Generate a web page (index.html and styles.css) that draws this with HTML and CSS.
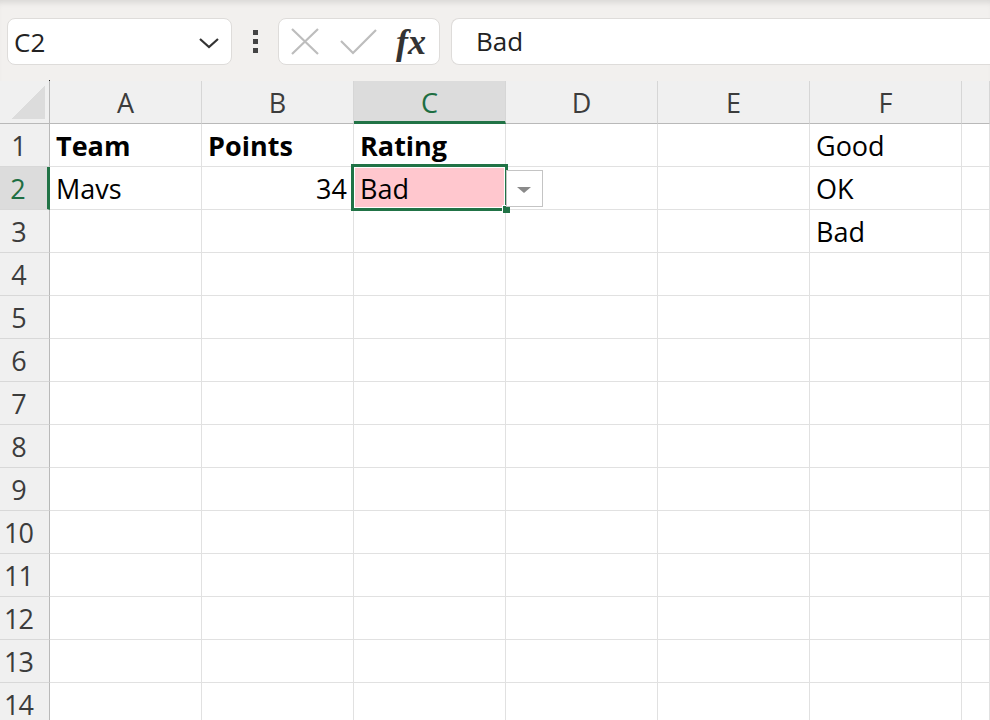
FILE: index.html
```html
<!DOCTYPE html>
<html lang="en">

<head>
    <meta charset="UTF-8">
    <meta name="viewport" content="width=device-width, initial-scale=1.0">
    <title>Rating - dropdown</title>
    <link rel="stylesheet" href="styles.css">
</head>

<body>
    <!-- formula bar -->
    <div class="toolbar">
        <div class="namebox">
            <span>C2</span>
            <svg class="chevron" width="22" height="12" viewBox="0 0 22 12">
                <path d="M2 2 L11 10 L20 2" fill="none" stroke="#333" stroke-width="2.2" />
            </svg>
        </div>
        <div class="grip">
            <i></i><i></i><i></i>
        </div>
        <div class="fxbtns">
            <svg width="28" height="27" viewBox="0 0 28 27">
                <path d="M1 1 L27 26 M27 1 L1 26" stroke="#bdbdbd" stroke-width="2.2" />
            </svg>
            <svg width="37" height="26" viewBox="0 0 37 26">
                <path d="M1 12 L13 24 L36 1" fill="none" stroke="#bdbdbd" stroke-width="2.2" />
            </svg>
            <span class="fx">fx</span>
        </div>
        <div class="formula">Bad</div>
    </div>

    <!-- sheet -->
    <div class="sheet">
        <div class="row head">
            <div class="rh corner"><i class="tri"></i></div>
            <div class="c">A</div>
            <div class="c">B</div>
            <div class="c sel">C</div>
            <div class="c">D</div>
            <div class="c">E</div>
            <div class="c">F</div>
            <div class="c last"></div>
        </div>
        <div class="row">
            <div class="rh">1</div>
            <div class="c b">Team</div>
            <div class="c b">Points</div>
            <div class="c b">Rating</div>
            <div class="c"></div>
            <div class="c"></div>
            <div class="c">Good</div>
            <div class="c last"></div>
        </div>
        <div class="row">
            <div class="rh sel">2</div>
            <div class="c">Mavs</div>
            <div class="c num">34</div>
            <div class="c active">Bad
                <span class="frame"><i class="handle"></i></span>
                <span class="ddbtn"><i></i></span>
            </div>
            <div class="c"></div>
            <div class="c"></div>
            <div class="c">OK</div>
            <div class="c last"></div>
        </div>
        <div class="row">
            <div class="rh">3</div>
            <div class="c"></div><div class="c"></div><div class="c"></div><div class="c"></div><div class="c"></div>
            <div class="c">Bad</div>
            <div class="c last"></div>
        </div>
        <div class="row"><div class="rh">4</div><div class="c"></div><div class="c"></div><div class="c"></div><div class="c"></div><div class="c"></div><div class="c"></div><div class="c last"></div></div>
        <div class="row"><div class="rh">5</div><div class="c"></div><div class="c"></div><div class="c"></div><div class="c"></div><div class="c"></div><div class="c"></div><div class="c last"></div></div>
        <div class="row"><div class="rh">6</div><div class="c"></div><div class="c"></div><div class="c"></div><div class="c"></div><div class="c"></div><div class="c"></div><div class="c last"></div></div>
        <div class="row"><div class="rh">7</div><div class="c"></div><div class="c"></div><div class="c"></div><div class="c"></div><div class="c"></div><div class="c"></div><div class="c last"></div></div>
        <div class="row"><div class="rh">8</div><div class="c"></div><div class="c"></div><div class="c"></div><div class="c"></div><div class="c"></div><div class="c"></div><div class="c last"></div></div>
        <div class="row"><div class="rh">9</div><div class="c"></div><div class="c"></div><div class="c"></div><div class="c"></div><div class="c"></div><div class="c"></div><div class="c last"></div></div>
        <div class="row"><div class="rh">10</div><div class="c"></div><div class="c"></div><div class="c"></div><div class="c"></div><div class="c"></div><div class="c"></div><div class="c last"></div></div>
        <div class="row"><div class="rh">11</div><div class="c"></div><div class="c"></div><div class="c"></div><div class="c"></div><div class="c"></div><div class="c"></div><div class="c last"></div></div>
        <div class="row"><div class="rh">12</div><div class="c"></div><div class="c"></div><div class="c"></div><div class="c"></div><div class="c"></div><div class="c"></div><div class="c last"></div></div>
        <div class="row"><div class="rh">13</div><div class="c"></div><div class="c"></div><div class="c"></div><div class="c"></div><div class="c"></div><div class="c"></div><div class="c last"></div></div>
        <div class="row"><div class="rh">14</div><div class="c"></div><div class="c"></div><div class="c"></div><div class="c"></div><div class="c"></div><div class="c"></div><div class="c last"></div></div>
    </div>
</body>

</html>
```

FILE: styles.css
```css
* {
    margin: 0;
    padding: 0;
    box-sizing: border-box;
}
body {
    width: 990px;
    height: 720px;
    overflow: hidden;
    background-color: #fff;
    font-family: "Open Sans", "Noto Sans", sans-serif;
    color: #000;
}

/* top bar */
.toolbar {
    display: flex;
    align-items: center;
    height: 81px;
    padding: 18px 0 16px 7px;
    background-color: #f2f0ee;
    box-shadow: inset 0 6px 6px -4px rgba(0, 0, 0, 0.12);
    font-size: 26px;
}
.namebox {
    display: flex;
    align-items: center;
    justify-content: space-between;
    width: 225px;
    height: 47px;
    padding: 0 11px 0 6px;
    background-color: #fff;
    border: 1px solid #dedcda;
    border-radius: 8px;
    color: #222;
}
.chevron {
    margin-top: 2px;
}
.grip {
    display: flex;
    flex-direction: column;
    gap: 4px;
    width: 46px;
    align-items: center;
}
.grip i {
    display: block;
    width: 5px;
    height: 5px;
    background-color: #444;
}
.fxbtns {
    display: flex;
    align-items: center;
    width: 162px;
    height: 47px;
    padding: 0 10px 0 12px;
    gap: 21px;
    background-color: #fff;
    border: 1px solid #dedcda;
    border-radius: 8px;
}
.fx {
    margin-left: -2px;
    font-family: "Liberation Serif", "DejaVu Serif", serif;
    font-style: italic;
    font-weight: bold;
    font-size: 36px;
    line-height: 1;
    color: #333;
}
.formula {
    flex: 1;
    height: 47px;
    margin-left: 11px;
    padding-left: 24px;
    line-height: 45px;
    background-color: #fff;
    border: 1px solid #dedcda;
    border-right: none;
    border-radius: 8px 0 0 8px;
    color: #222;
}

/* grid */
.sheet {
    font-size: 27px;
}
.row {
    display: flex;
    height: 43px;
}
.rh {
    flex: none;
    width: 50px;
    padding: 3px 12px 0 0;
    line-height: 38px;
    text-align: center;
    letter-spacing: -1px;
    color: #3c3c3c;
    background-color: #f0f0f0;
    border-right: 1px solid #b9b9b9;
    border-bottom: 1px solid #d8d8d8;
}
.c {
    position: relative;
    flex: none;
    width: 152px;
    padding: 3px 6px 0 6px;
    line-height: 38px;
    white-space: nowrap;
    border-right: 1px solid #e1e1e1;
    border-bottom: 1px solid #e1e1e1;
}
.c.last {
    flex: 1;
}
.c.b {
    font-weight: bold;
}
.c.num {
    text-align: right;
}

/* column header row */
.head .c {
    text-align: center;
    color: #3c3c3c;
    background-color: #f0f0f0;
    border-right: 1px solid #d6d6d6;
    border-bottom: 1px solid #b9b9b9;
}
.head .c.sel {
    background-color: #dcdcdc;
    color: #1e6e42;
    border-bottom: 3px solid #217346;
}
.corner {
    position: relative;
    border-bottom: 1px solid #b9b9b9;
}
.corner::after {
    content: "";
    position: absolute;
    top: -1px;
    right: -1px;
    width: 1px;
    height: 1px;
    background-color: #222;
}
.tri {
    position: absolute;
    right: 4px;
    bottom: 4px;
    width: 34px;
    height: 34px;
    background: linear-gradient(to bottom right, transparent 50%, #dcdcdc 50%);
}
.rh.sel {
    background-color: #dcdcdc;
    color: #1e6e42;
    border-right: 3px solid #217346;
}

/* active cell */
.c.active {
    z-index: 2;
    background-color: #ffc7ce;
}
.frame {
    position: absolute;
    top: -3px;
    left: -3px;
    width: 157px;
    height: 47px;
    border: 3px solid #217346;
    box-shadow: inset 0 0 0 1px #fff;
}
.handle {
    position: absolute;
    right: -5px;
    bottom: -5px;
    width: 8px;
    height: 8px;
    background-color: #217346;
    border-top: 1px solid #fff;
    border-left: 1px solid #fff;
}
.ddbtn {
    position: absolute;
    top: 3px;
    left: 152px;
    width: 37px;
    height: 37px;
    background-color: #fff;
    border: 1px solid #c4c4c4;
}
.ddbtn i {
    position: absolute;
    top: 16px;
    left: 10px;
    border-left: 7px solid transparent;
    border-right: 7px solid transparent;
    border-top: 6px solid #8a8a8a;
}
```
